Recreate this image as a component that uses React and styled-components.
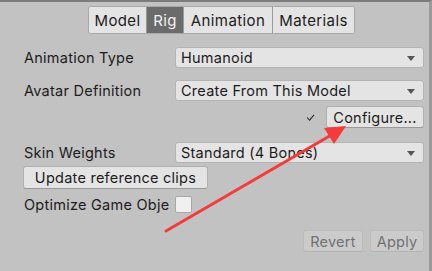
import React from 'react';
import styled, { createGlobalStyle } from 'styled-components';

const Global = createGlobalStyle`
  html, body { margin: 0; padding: 0; background: #c2c2c2; }
  body { font-family: Inter, "Noto Sans", sans-serif; }
`;

const tabs = [
  { name: 'Model', w: 58 },
  { name: 'Rig', w: 37, active: true },
  { name: 'Animation', w: 89 },
  { name: 'Materials', w: 81, last: true },
];

export default function App() {
  return (
    <>
      <Global />
      <Panel>
        <TabBar>
          <Tabs>
            {tabs.map((t) => (
              <Tab key={t.name} w={t.w} active={t.active} last={t.last}>{t.name}</Tab>
            ))}
          </Tabs>
        </TabBar>

        <Form>
          <Row>
            <Label>Animation Type</Label>
            <Select>
              <span>Humanoid</span>
              <Caret />
            </Select>
          </Row>
          <Row mt={11}>
            <Label>Avatar Definition</Label>
            <Select>
              <span>Create From This Model</span>
              <Caret />
            </Select>
          </Row>
          <ConfigRow>
            <Check viewBox="0 0 10 8">
              <path d="M1 4 L4 7 L9 1" fill="none" stroke="#2a2a2a" strokeWidth="1.2" />
            </Check>
            <Button w={98}>Configure...</Button>
          </ConfigRow>
          <Row mt={13}>
            <Label>Skin Weights</Label>
            <Select>
              <span>Standard (4 Bones)</span>
              <Caret />
            </Select>
          </Row>
          <WideButton>Update reference clips</WideButton>
          <Row mt={4}>
            <Label>Optimize Game Obje</Label>
            <CheckBox />
          </Row>
        </Form>

        <Footer>
          <Button disabled w={60}>Revert</Button>
          <Button disabled w={54}>Apply</Button>
        </Footer>

        <Arrow viewBox="0 0 432 271">
          <line x1="166" y1="231" x2="333" y2="134" stroke="#f43b3b" strokeWidth="3" strokeLinecap="round" />
          <polygon points="346,126 324,128 334,144" fill="#f43b3b" />
        </Arrow>
      </Panel>
    </>
  );
}

const Panel = styled.div`
  position: relative;
  width: 429px;
  height: 269px;
  border-top: 2px solid #7c7c7c;
  border-right: 3px solid #9a9a9a;
  background: #c2c2c2;
  font-size: 14.5px;
  letter-spacing: 0.25px;
  color: #1c1c1c;
  display: flex;
  flex-direction: column;
`;

const TabBar = styled.div`
  display: flex;
  padding: 4px 0 0 88px;
`;

const Tabs = styled.div`
  display: flex;
  border: 1px solid #a8a8a8;
  border-radius: 3px;
  overflow: hidden;
  background: #e4e4e4;
  height: 26px;
`;

const Tab = styled.div`
  width: ${(p) => p.w}px;
  display: flex;
  align-items: center;
  justify-content: center;
  font-size: 15px;
  letter-spacing: 0.4px;
  box-sizing: border-box;
  color: ${(p) => (p.active ? '#f2f2f2' : '#1c1c1c')};
  background: ${(p) => (p.active ? '#6b6b6b' : '#e4e4e4')};
  border-right: ${(p) => (p.last ? 'none' : '1px solid #9a9a9a')};
`;

const Form = styled.div`
  display: flex;
  flex-direction: column;
  padding: 12px 5px 0 23px;
`;

const Row = styled.div`
  display: flex;
  align-items: center;
  height: 22px;
  margin-top: ${(p) => p.mt || 0}px;
`;

const Label = styled.div`
  width: 152px;
  flex: none;
  padding-left: 1px;
  box-sizing: border-box;
  white-space: nowrap;
`;

const Select = styled.div`
  flex: 1;
  height: 21px;
  display: flex;
  align-items: center;
  justify-content: space-between;
  padding: 0 8px 0 5px;
  background: #e4e4e4;
  border: 1px solid #b4b4b4;
  border-radius: 3px;
  box-sizing: border-box;
  white-space: nowrap;
`;

const Caret = styled.span`
  width: 0;
  height: 0;
  border-left: 4px solid transparent;
  border-right: 4px solid transparent;
  border-top: 5px solid #555;
  margin-top: 2px;
`;

const ConfigRow = styled.div`
  display: flex;
  justify-content: flex-end;
  align-items: center;
  gap: 11px;
  margin-top: 5px;
`;

const Check = styled.svg`
  width: 9px;
  height: 7px;
  margin-top: 1px;
`;

const Button = styled.div`
  height: 22px;
  display: flex;
  align-items: center;
  justify-content: center;
  padding: 0 8px;
  ${(p) => p.w && `width: ${p.w}px; padding: 0;`}
  background: ${(p) => (p.disabled ? '#cbcbcb' : '#e4e4e4')};
  color: ${(p) => (p.disabled ? '#717171' : '#1c1c1c')};
  border: 1px solid ${(p) => (p.disabled ? '#bcbcbc' : '#b0b0b0')};
  border-bottom-color: ${(p) => (p.disabled ? '#b4b4b4' : '#999')};
  border-radius: 3px;
  box-sizing: border-box;
  white-space: nowrap;
`;

const WideButton = styled(Button)`
  align-self: flex-start;
  height: 23px;
  width: 185px;
  margin-top: 3px;
`;

const CheckBox = styled.div`
  width: 15px;
  height: 15px;
  background: #f0f0f0;
  border: 1px solid #a8a8a8;
  border-radius: 2px;
`;

const Footer = styled.div`
  display: flex;
  justify-content: flex-end;
  gap: 7px;
  padding: 15px 5px 0 0;
`;

const Arrow = styled.svg`
  position: absolute;
  left: 0;
  top: -2px;
  width: 432px;
  height: 271px;
  pointer-events: none;
`;
